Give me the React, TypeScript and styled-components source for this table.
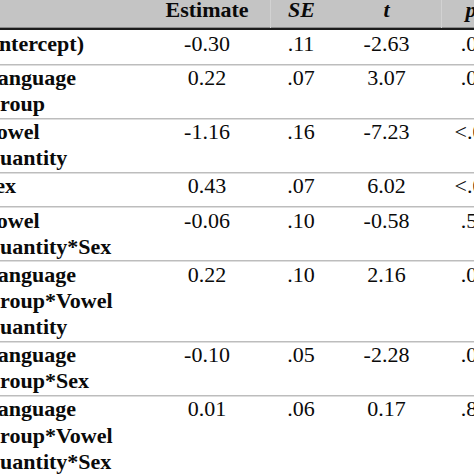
import React from "react";
import styled, { createGlobalStyle } from "styled-components";

const Global = createGlobalStyle`
  html, body {
    margin: 0;
    padding: 0;
    background: #ffffff;
    overflow: hidden;
  }
  body {
    width: 474px;
    height: 474px;
  }
`;

const COLS = "166px 126px 62px 109px 78px";

const Table = styled.div`
  margin-left: -22px;
  width: 541px;
  font-family: "Liberation Serif", "Times New Roman", serif;
  font-size: 22px;
  color: #0a0a0a;
`;

const HeaderRow = styled.div`
  display: grid;
  grid-template-columns: ${COLS};
  height: 28px;
  background: #c4c4c4;
  border-bottom: 2px solid #1c1c1c;
  box-shadow: inset 0 -1px 0 #8a8a8a;
`;

const HeadCell = styled.div<{ $divider?: boolean; $italic?: boolean; $shift?: number }>`
  font-weight: bold;
  font-style: ${(p) => (p.$italic ? "italic" : "normal")};
  line-height: 20px;
  text-align: center;
  padding-right: ${(p) => p.$shift ?? 0}px;
  border-left: ${(p) => (p.$divider ? "1px solid #d2d2d2" : "none")};
`;

const Row = styled.div`
  display: grid;
  grid-template-columns: ${COLS};
  min-height: 33px;
  padding-top: 0.5px;
  border-bottom: 1px solid #bdbdbd;
  box-shadow: 0 1px 0 #dedede;
  line-height: 26.3px;
`;

const Label = styled.div`
  font-weight: bold;
  padding: 0 19px 0 5px;
  text-align: left;
`;

const Num = styled.div`
  text-align: center;
`;

type Item = { label: string; est: string; se: string; t: string; p: string };

const rows: Item[] = [
  { label: "(Intercept)", est: "-0.30", se: ".11", t: "-2.63", p: ".009" },
  { label: "Language Group", est: "0.22", se: ".07", t: "3.07", p: ".002" },
  { label: "Vowel Quantity", est: "-1.16", se: ".16", t: "-7.23", p: "<.001" },
  { label: "Sex", est: "0.43", se: ".07", t: "6.02", p: "<.001" },
  { label: "Vowel Quantity*Sex", est: "-0.06", se: ".10", t: "-0.58", p: ".563" },
  { label: "Language Group*Vowel Quantity", est: "0.22", se: ".10", t: "2.16", p: ".031" },
  { label: "Language Group*Sex", est: "-0.10", se: ".05", t: "-2.28", p: ".023" },
  { label: "Language Group*Vowel Quantity*Sex", est: "0.01", se: ".06", t: "0.17", p: ".867" },
];

export default function App() {
  return (
    <>
      <Global />
      <Table>
        <HeaderRow>
          <HeadCell />
          <HeadCell>Estimate</HeadCell>
          <HeadCell $divider $italic>SE</HeadCell>
          <HeadCell $italic>t</HeadCell>
          <HeadCell $divider $italic $shift={19}>p</HeadCell>
        </HeaderRow>
        {rows.map((r) => (
          <Row key={r.label}>
            <Label>{r.label}</Label>
            <Num>{r.est}</Num>
            <Num>{r.se}</Num>
            <Num>{r.t}</Num>
            <Num>{r.p}</Num>
          </Row>
        ))}
      </Table>
    </>
  );
}
